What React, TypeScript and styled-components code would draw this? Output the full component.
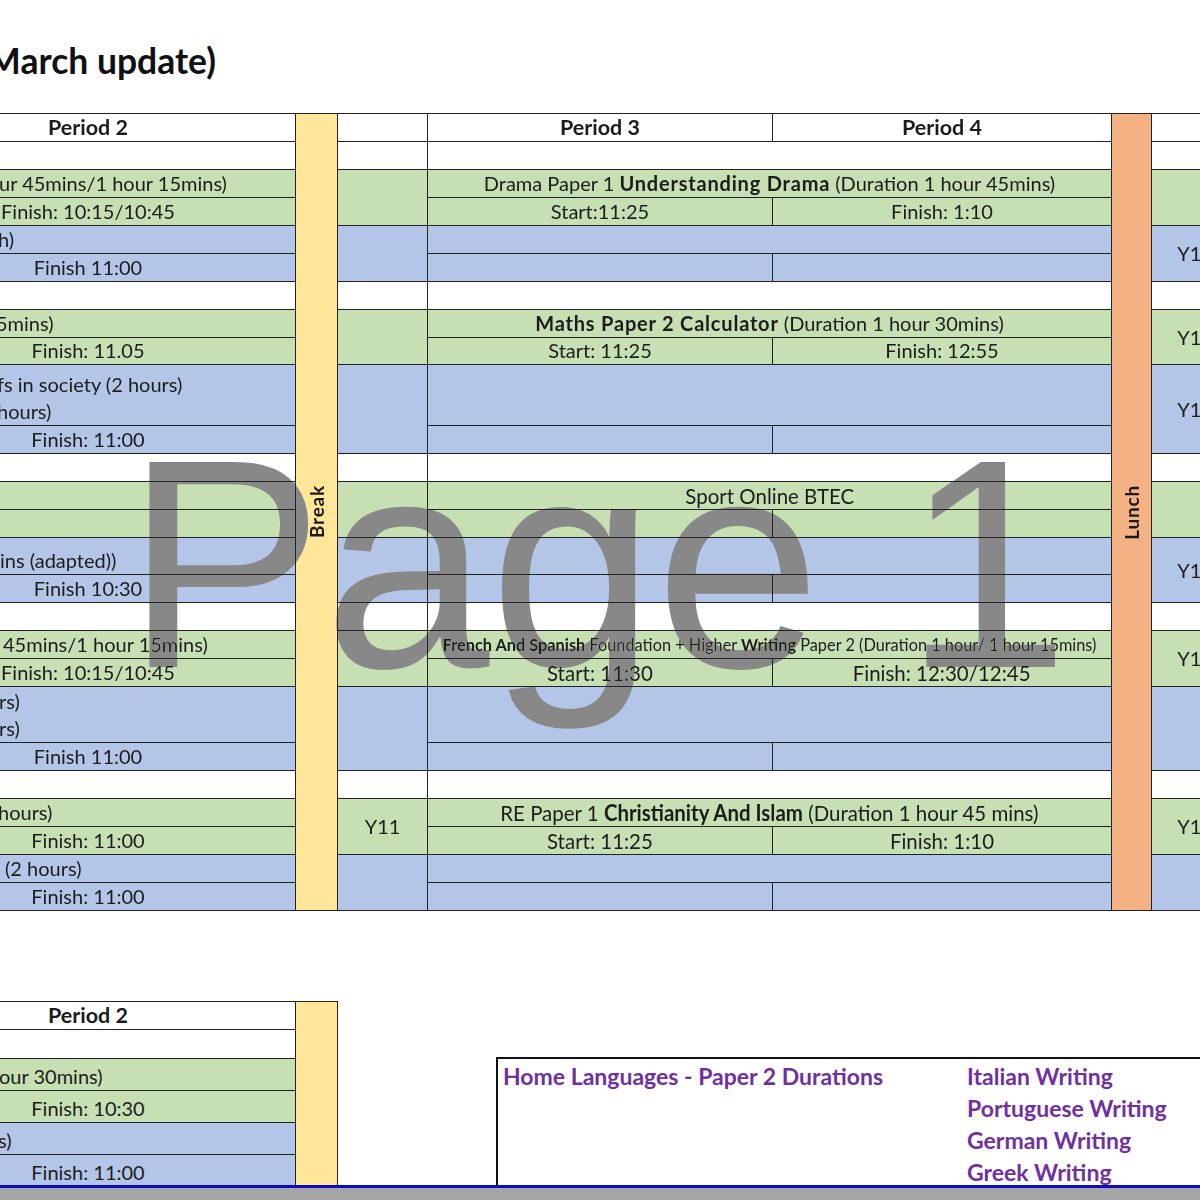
import React from "react";
import styled, { createGlobalStyle } from "styled-components";

type Tone = "white" | "green" | "blue";

const TONE: Record<Tone, string> = {
  white: "#ffffff",
  green: "#c6e0b4",
  blue: "#b4c6e7",
};

// page x of the first column's left edge (the column runs off screen)
const C1_LEFT = -119;

const TOP_ROWS = [
  27, 27, 27, 27, 27, 27, 27, 27, 26, 60, 27, 27, 27, 27, 36, 27, 27, 27, 27,
  55, 27, 27, 27, 27, 27, 27,
];

interface Frag {
  lines: string[];
  x: number;
}

interface Block {
  row: number;
  g1?: Frag;
  g2?: string;
  b1?: Frag;
  b2?: string;
  title?: React.ReactNode;
  titleKind?: "plain" | "narrow" | "small";
  start?: string;
  finish?: string;
  timeNarrow?: boolean;
  c3Green?: string;
  c7Green?: string;
  c7Blue?: string;
  gapAfter?: boolean;
}

const blocks: Block[] = [
  {
    row: 3,
    g1: { lines: ["ur 45mins/1 hour 15mins)"], x: -1 },
    g2: "Finish: 10:15/10:45",
    b1: { lines: ["h)"], x: -2 },
    b2: "Finish 11:00",
    title: (
      <>
        Drama Paper 1 <b>Understanding Drama</b> (Duration 1 hour 45mins)
      </>
    ),
    start: "Start:11:25",
    finish: "Finish: 1:10",
    c7Blue: "Y11",
    gapAfter: true,
  },
  {
    row: 8,
    g1: { lines: ["5mins)"], x: -4 },
    g2: "Finish: 11.05",
    b1: { lines: ["fs in society (2 hours)", "hours)"], x: -3 },
    b2: "Finish: 11:00",
    title: (
      <>
        <b>Maths Paper 2 Calculator</b> (Duration 1 hour 30mins)
      </>
    ),
    start: "Start: 11:25",
    finish: "Finish: 12:55",
    c7Green: "Y11",
    c7Blue: "Y11",
    gapAfter: true,
  },
  {
    row: 13,
    b1: { lines: ["ins (adapted))"], x: 0 },
    b2: "Finish 10:30",
    title: "Sport Online BTEC",
    titleKind: "narrow",
    c7Blue: "Y11",
    gapAfter: true,
  },
  {
    row: 18,
    g1: { lines: ["45mins/1 hour 15mins)"], x: 3 },
    g2: "Finish: 10:15/10:45",
    b1: { lines: ["rs)", "rs)"], x: -1 },
    b2: "Finish 11:00",
    title: (
      <>
        <b>French And Spanish</b> Foundation + Higher <b>Writing</b> Paper 2
        (Duration 1 hour/ 1 hour 15mins)
      </>
    ),
    titleKind: "small",
    start: "Start: 11:30",
    finish: "Finish: 12:30/12:45",
    timeNarrow: true,
    c7Green: "Y11",
    gapAfter: true,
  },
  {
    row: 23,
    g1: { lines: ["hours)"], x: -2 },
    g2: "Finish: 11:00",
    b1: { lines: ["(2 hours)"], x: 5 },
    b2: "Finish: 11:00",
    title: (
      <>
        RE Paper 1 <b>Christianity And Islam</b> (Duration 1 hour 45 mins)
      </>
    ),
    titleKind: "narrow",
    start: "Start: 11:25",
    finish: "Finish: 1:10",
    timeNarrow: true,
    c3Green: "Y11",
    c7Green: "Y11",
  },
];

const GlobalStyle = createGlobalStyle`
  html, body {
    margin: 0;
    padding: 0;
    background: #ffffff;
    overflow: hidden;
  }
  body {
    font-family: Lato, "Open Sans", sans-serif;
    color: #1c1c1c;
  }
`;

const Page = styled.div`
  width: 1440px;
  margin-left: ${C1_LEFT - 1}px;
`;

const Title = styled.h1`
  margin: 0;
  height: 113px;
  width: ${216 - C1_LEFT + 1}px;
  box-sizing: border-box;
  padding-top: 41px;
  display: flex;
  justify-content: flex-end;
  align-items: flex-start;
  font-size: 35.5px;
  font-weight: 700;
  line-height: 40px;
  white-space: nowrap;
  color: #111;
`;

const Sheet = styled.div<{ $rows: number[]; $cols: string }>`
  position: relative;
  isolation: isolate;
  display: grid;
  grid-template-columns: ${(p) => p.$cols};
  grid-template-rows: ${(p) => p.$rows.map((h) => `${h}px`).join(" ")};
  gap: 1px;
  padding: 1px;
  width: max-content;
  background: #222222;
`;

const Cell = styled.div<{
  $r: number;
  $c: number;
  $rs?: number;
  $cs?: number;
  $tone: Tone;
  $mid?: boolean;
  $left?: number;
}>`
  grid-row: ${(p) => p.$r} / span ${(p) => p.$rs ?? 1};
  grid-column: ${(p) => p.$c} / span ${(p) => p.$cs ?? 1};
  background: ${(p) => TONE[p.$tone]};
  display: flex;
  flex-direction: column;
  justify-content: ${(p) => (p.$mid ? "center" : "flex-end")};
  align-items: ${(p) => (p.$left !== undefined ? "flex-start" : "center")};
  padding-left: ${(p) => (p.$left !== undefined ? `${p.$left}px` : "0")};
  overflow: hidden;
  font-size: 20px;
  line-height: 27px;
  white-space: nowrap;
`;

const CellText = styled.span`
  display: block;

  b {
    letter-spacing: 0.8px;
  }
`;

const HeadText = styled.span`
  font-size: 21.5px;
  font-weight: 700;
`;

const Squeeze = styled.span<{ $small?: boolean }>`
  display: inline-block;
  font-size: ${(p) => (p.$small ? "17px" : "22px")};
  transform: scaleX(${(p) => (p.$small ? 0.96 : 0.93)});
`;

const Band = styled.div<{ $c: number; $color: string; $span: number }>`
  grid-row: 1 / span ${(p) => p.$span};
  grid-column: ${(p) => p.$c};
  background: ${(p) => p.$color};
  display: flex;
  align-items: center;
  justify-content: center;
`;

const BandLabel = styled.span`
  writing-mode: vertical-rl;
  transform: rotate(180deg);
  font-size: 19px;
  font-weight: 700;
  letter-spacing: 0.8px;
  color: #1a1a1a;
`;

const Watermark = styled.div`
  position: absolute;
  left: 245px;
  top: 302px;
  font-family: "Liberation Sans", Arial, sans-serif;
  font-size: 298px;
  line-height: 1;
  color: #888888;
  white-space: nowrap;
  mix-blend-mode: darken;
  pointer-events: none;
`;

const Lower = styled.div`
  display: flex;
  align-items: flex-start;
  height: 184px;
  margin-top: 90px;
  overflow: hidden;
`;

const NoteBox = styled.div`
  margin: 56px 0 0 158px;
  flex: 1;
  height: 200px;
  border-left: 2px solid #111;
  border-top: 2px solid #111;
  display: grid;
  grid-template-columns: 464px 1fr;
  grid-auto-rows: 32px;
  align-items: center;
  padding: 1px 0 0 5px;
  font-size: 23px;
  font-weight: 700;
  color: #7030a0;
`;

const NoteItem = styled.div<{ $col: number }>`
  grid-column: ${(p) => p.$col};
  white-space: nowrap;
`;

const PageBreak = styled.div`
  height: 3px;
  background: #0b0bc4;
`;

const OffPage = styled.div`
  height: 40px;
  background: #a5a5a5;
`;

const fragLeft = (x: number) => -C1_LEFT + x;

function FragLines({ f }: { f?: Frag }) {
  if (!f) return null;
  return (
    <>
      {f.lines.map((l, i) => (
        <CellText key={i}>{l}</CellText>
      ))}
    </>
  );
}

function BlockCells({ b }: { b: Block }) {
  const r = b.row;
  const time = (t?: string) =>
    t && (b.timeNarrow ? <Squeeze>{t}</Squeeze> : <CellText>{t}</CellText>);
  const title =
    b.titleKind === "narrow" ? (
      <Squeeze>{b.title}</Squeeze>
    ) : b.titleKind === "small" ? (
      <Squeeze $small>{b.title}</Squeeze>
    ) : (
      <CellText>{b.title}</CellText>
    );

  return (
    <>
      <Cell $r={r} $c={1} $tone="green" $left={b.g1 && fragLeft(b.g1.x)}>
        <FragLines f={b.g1} />
      </Cell>
      <Cell $r={r} $c={3} $rs={2} $tone="green" $mid>
        {b.c3Green}
      </Cell>
      <Cell $r={r} $c={4} $cs={2} $tone="green">
        {title}
      </Cell>
      <Cell $r={r} $c={7} $rs={2} $tone="green" $mid>
        {b.c7Green}
      </Cell>

      <Cell $r={r + 1} $c={1} $tone="green">
        {b.g2}
      </Cell>
      <Cell $r={r + 1} $c={4} $tone="green">
        {time(b.start)}
      </Cell>
      <Cell $r={r + 1} $c={5} $tone="green">
        {time(b.finish)}
      </Cell>

      <Cell $r={r + 2} $c={1} $tone="blue" $left={b.b1 && fragLeft(b.b1.x)}>
        <FragLines f={b.b1} />
      </Cell>
      <Cell $r={r + 2} $c={3} $rs={2} $tone="blue" $mid />
      <Cell $r={r + 2} $c={4} $cs={2} $tone="blue" />
      <Cell $r={r + 2} $c={7} $rs={2} $tone="blue" $mid>
        {b.c7Blue}
      </Cell>

      <Cell $r={r + 3} $c={1} $tone="blue">
        {b.b2}
      </Cell>
      <Cell $r={r + 3} $c={4} $tone="blue" />
      <Cell $r={r + 3} $c={5} $tone="blue" />

      {b.gapAfter && <BlankRow r={r + 4} />}
    </>
  );
}

function BlankRow({ r }: { r: number }) {
  return (
    <>
      <Cell $r={r} $c={1} $tone="white" />
      <Cell $r={r} $c={3} $tone="white" />
      <Cell $r={r} $c={4} $cs={2} $tone="white" />
      <Cell $r={r} $c={7} $tone="white" />
    </>
  );
}

const notesRight = [
  "Italian Writing",
  "Portuguese Writing",
  "German Writing",
  "Greek Writing",
];

export default function App() {
  return (
    <>
      <GlobalStyle />
      <Page>
        <Title>Year 11 Mock Examination Timetable (March update)</Title>

        <Sheet $rows={TOP_ROWS} $cols="414px 41px 89px 344px 338px 39px 86px">
          <Cell $r={1} $c={1} $tone="white">
            <HeadText>Period 2</HeadText>
          </Cell>
          <Band $c={2} $span={26} $color="#ffe699">
            <BandLabel>Break</BandLabel>
          </Band>
          <Cell $r={1} $c={3} $tone="white" />
          <Cell $r={1} $c={4} $tone="white">
            <HeadText>Period 3</HeadText>
          </Cell>
          <Cell $r={1} $c={5} $tone="white">
            <HeadText>Period 4</HeadText>
          </Cell>
          <Band $c={6} $span={26} $color="#f4b183">
            <BandLabel>Lunch</BandLabel>
          </Band>
          <Cell $r={1} $c={7} $tone="white" />

          <BlankRow r={2} />
          {blocks.map((b) => (
            <BlockCells key={b.row} b={b} />
          ))}

          <Watermark>Page 1</Watermark>
        </Sheet>

        <Lower>
          <Sheet $rows={[27, 28, 31, 31, 31, 31]} $cols="414px 41px">
            <Cell $r={1} $c={1} $tone="white">
              <HeadText>Period 2</HeadText>
            </Cell>
            <Band $c={2} $span={6} $color="#ffe699" />
            <Cell $r={2} $c={1} $tone="white" />
            <Cell $r={3} $c={1} $tone="green" $left={fragLeft(-1)}>
              our 30mins)
            </Cell>
            <Cell $r={4} $c={1} $tone="green">
              Finish: 10:30
            </Cell>
            <Cell $r={5} $c={1} $tone="blue" $left={fragLeft(-2)}>
              s)
            </Cell>
            <Cell $r={6} $c={1} $tone="blue">
              Finish: 11:00
            </Cell>
          </Sheet>

          <NoteBox>
            <NoteItem $col={1}>Home Languages - Paper 2 Durations</NoteItem>
            {notesRight.map((n) => (
              <NoteItem key={n} $col={2}>
                {n}
              </NoteItem>
            ))}
          </NoteBox>
        </Lower>
        <PageBreak />
        <OffPage />
      </Page>
    </>
  );
}
